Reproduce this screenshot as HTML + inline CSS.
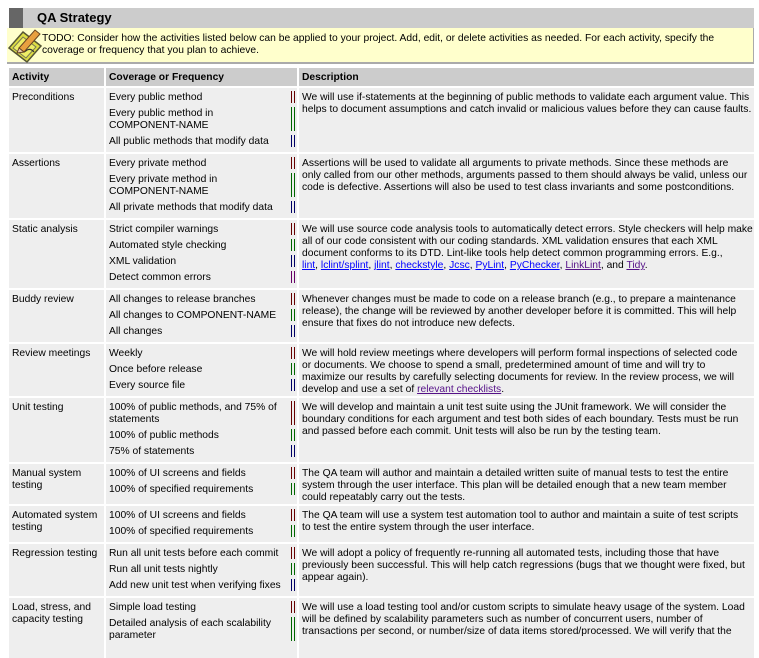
<!DOCTYPE html>
<html><head><meta charset="utf-8"><style>
*{margin:0;padding:0;box-sizing:border-box}
body{width:759px;height:634px;overflow:hidden;background:#fff;font-family:"Liberation Sans",Arial,sans-serif;font-size:10.3px;line-height:12px;color:#000;position:relative}
.abs{position:absolute}
.hdr{left:9px;top:8px;width:745px;height:20px;background:#ccc}
.hdr .blk{position:absolute;left:0;top:0;width:14px;height:20px;background:#666}
.hdr .t{position:absolute;left:28px;top:3px;font-weight:bold;font-size:13px;line-height:14px}
.note{left:7px;top:28px;width:747px;height:36px;background:#ffc;border-right:1px solid #aaa;border-bottom:2px solid #aaa}
.note .t{position:absolute;left:35px;top:5px;white-space:nowrap}
.c{position:absolute;background:#eee;padding:4px 3px 0 3px;white-space:nowrap}
.h{background:#ccc;font-weight:bold;padding-top:4px}
.cov{display:flex;flex-direction:column;gap:4px}
.cov div{position:relative}
.cov div::after{content:"";position:absolute;left:182px;top:-1px;width:4px;height:100%;border-left:1px solid var(--b);border-right:1px solid var(--b);box-sizing:border-box}
.r{--b:#600}.g{--b:#060}.b{--b:#006}.p{--b:#606}
a{color:#00f;text-decoration:underline}
a.v{color:#518}
</style></head><body>
<div class="abs hdr"><div class="blk"></div><div class="t">QA Strategy</div></div>
<div class="abs note">
<svg style="position:absolute;left:0;top:-2px" width="36" height="38" viewBox="0 0 36 38">
<path d="M2 22 L16 6 L34 20 L20 36 Z" fill="#dd4" stroke="#553" stroke-width="1.5"/>
<path d="M6 22 L16 11 L29 21 L19 32 Z" fill="#ee6" stroke="#775" stroke-width="1"/>
<path d="M11 24 Q16 28 20 24 Q24 22 27 26" fill="none" stroke="#333" stroke-width="1.2"/>
<path d="M12 22 L28 4 L33 8 L17 26 Z" fill="#e8a040" stroke="#642" stroke-width="1"/>
<path d="M12 22 L17 26 L10 27 Z" fill="#eca" stroke="#642" stroke-width="1"/>
</svg>
<div class="t">TODO: Consider how the activities listed below can be applied to your project. Add, edit, or delete activities as needed. For each activity, specify the<br>coverage or frequency that you plan to achieve.</div>
</div>

<div class="c h" style="left:9px;top:68px;width:95px;height:18px">Activity</div>
<div class="c h" style="left:106px;top:68px;width:191px;height:18px">Coverage or Frequency</div>
<div class="c h" style="left:299px;top:68px;width:455px;height:18px">Description</div>

<div class="c" style="left:9px;top:88px;width:95px;height:64px">Preconditions</div>
<div class="c cov" style="left:106px;top:88px;width:191px;height:64px"><div class="r">Every public method</div><div class="g">Every public method in<br>COMPONENT-NAME</div><div class="b">All public methods that modify data</div></div>
<div class="c" style="left:299px;top:88px;width:455px;height:64px">We will use if-statements at the beginning of public methods to validate each argument value. This<br>helps to document assumptions and catch invalid or malicious values before they can cause faults.</div>

<div class="c" style="left:9px;top:154px;width:95px;height:64px">Assertions</div>
<div class="c cov" style="left:106px;top:154px;width:191px;height:64px"><div class="r">Every private method</div><div class="g">Every private method in<br>COMPONENT-NAME</div><div class="b">All private methods that modify data</div></div>
<div class="c" style="left:299px;top:154px;width:455px;height:64px">Assertions will be used to validate all arguments to private methods. Since these methods are<br>only called from our other methods, arguments passed to them should always be valid, unless our<br>code is defective. Assertions will also be used to test class invariants and some postconditions.</div>

<div class="c" style="left:9px;top:220px;width:95px;height:68px">Static analysis</div>
<div class="c cov" style="left:106px;top:220px;width:191px;height:68px"><div class="r">Strict compiler warnings</div><div class="g">Automated style checking</div><div class="b">XML validation</div><div class="p">Detect common errors</div></div>
<div class="c" style="left:299px;top:220px;width:455px;height:68px">We will use source code analysis tools to automatically detect errors. Style checkers will help make<br>all of our code consistent with our coding standards. XML validation ensures that each XML<br>document conforms to its DTD. Lint-like tools help detect common programming errors. E.g.,<br><a>lint</a>, <a>lclint/splint</a>, <a>jlint</a>, <a>checkstyle</a>, <a>Jcsc</a>, <a>PyLint</a>, <a>PyChecker</a>, <a class="v">LinkLint</a>, and <a class="v">Tidy</a>.</div>

<div class="c" style="left:9px;top:290px;width:95px;height:52px">Buddy review</div>
<div class="c cov" style="left:106px;top:290px;width:191px;height:52px"><div class="r">All changes to release branches</div><div class="g">All changes to COMPONENT-NAME</div><div class="b">All changes</div></div>
<div class="c" style="left:299px;top:290px;width:455px;height:52px">Whenever changes must be made to code on a release branch (e.g., to prepare a maintenance<br>release), the change will be reviewed by another developer before it is committed. This will help<br>ensure that fixes do not introduce new defects.</div>

<div class="c" style="left:9px;top:344px;width:95px;height:52px">Review meetings</div>
<div class="c cov" style="left:106px;top:344px;width:191px;height:52px"><div class="r">Weekly</div><div class="g">Once before release</div><div class="b">Every source file</div></div>
<div class="c" style="left:299px;top:344px;width:455px;height:52px">We will hold review meetings where developers will perform formal inspections of selected code<br>or documents. We choose to spend a small, predetermined amount of time and will try to<br>maximize our results by carefully selecting documents for review. In the review process, we will<br>develop and use a set of <a class="v">relevant checklists</a>.</div>

<div class="c" style="left:9px;top:398px;width:95px;height:64px">Unit testing</div>
<div class="c cov" style="left:106px;top:398px;width:191px;height:64px"><div class="r">100% of public methods, and 75% of<br>statements</div><div class="g">100% of public methods</div><div class="b">75% of statements</div></div>
<div class="c" style="left:299px;top:398px;width:455px;height:64px">We will develop and maintain a unit test suite using the JUnit framework. We will consider the<br>boundary conditions for each argument and test both sides of each boundary. Tests must be run<br>and passed before each commit. Unit tests will also be run by the testing team.</div>

<div class="c" style="left:9px;top:464px;width:95px;height:40px">Manual system<br>testing</div>
<div class="c cov" style="left:106px;top:464px;width:191px;height:40px"><div class="r">100% of UI screens and fields</div><div class="g">100% of specified requirements</div></div>
<div class="c" style="left:299px;top:464px;width:455px;height:40px">The QA team will author and maintain a detailed written suite of manual tests to test the entire<br>system through the user interface. This plan will be detailed enough that a new team member<br>could repeatably carry out the tests.</div>

<div class="c" style="left:9px;top:506px;width:95px;height:36px">Automated system<br>testing</div>
<div class="c cov" style="left:106px;top:506px;width:191px;height:36px"><div class="r">100% of UI screens and fields</div><div class="g">100% of specified requirements</div></div>
<div class="c" style="left:299px;top:506px;width:455px;height:36px">The QA team will use a system test automation tool to author and maintain a suite of test scripts<br>to test the entire system through the user interface.</div>

<div class="c" style="left:9px;top:544px;width:95px;height:52px">Regression testing</div>
<div class="c cov" style="left:106px;top:544px;width:191px;height:52px"><div class="r">Run all unit tests before each commit</div><div class="g">Run all unit tests nightly</div><div class="b">Add new unit test when verifying fixes</div></div>
<div class="c" style="left:299px;top:544px;width:455px;height:52px">We will adopt a policy of frequently re-running all automated tests, including those that have<br>previously been successful. This will help catch regressions (bugs that we thought were fixed, but<br>appear again).</div>

<div class="c" style="left:9px;top:598px;width:95px;height:60px">Load, stress, and<br>capacity testing</div>
<div class="c cov" style="left:106px;top:598px;width:191px;height:60px"><div class="r">Simple load testing</div><div class="g">Detailed analysis of each scalability<br>parameter</div></div>
<div class="c" style="left:299px;top:598px;width:455px;height:60px">We will use a load testing tool and/or custom scripts to simulate heavy usage of the system. Load<br>will be defined by scalability parameters such as number of concurrent users, number of<br>transactions per second, or number/size of data items stored/processed. We will verify that the</div>
</body></html>
